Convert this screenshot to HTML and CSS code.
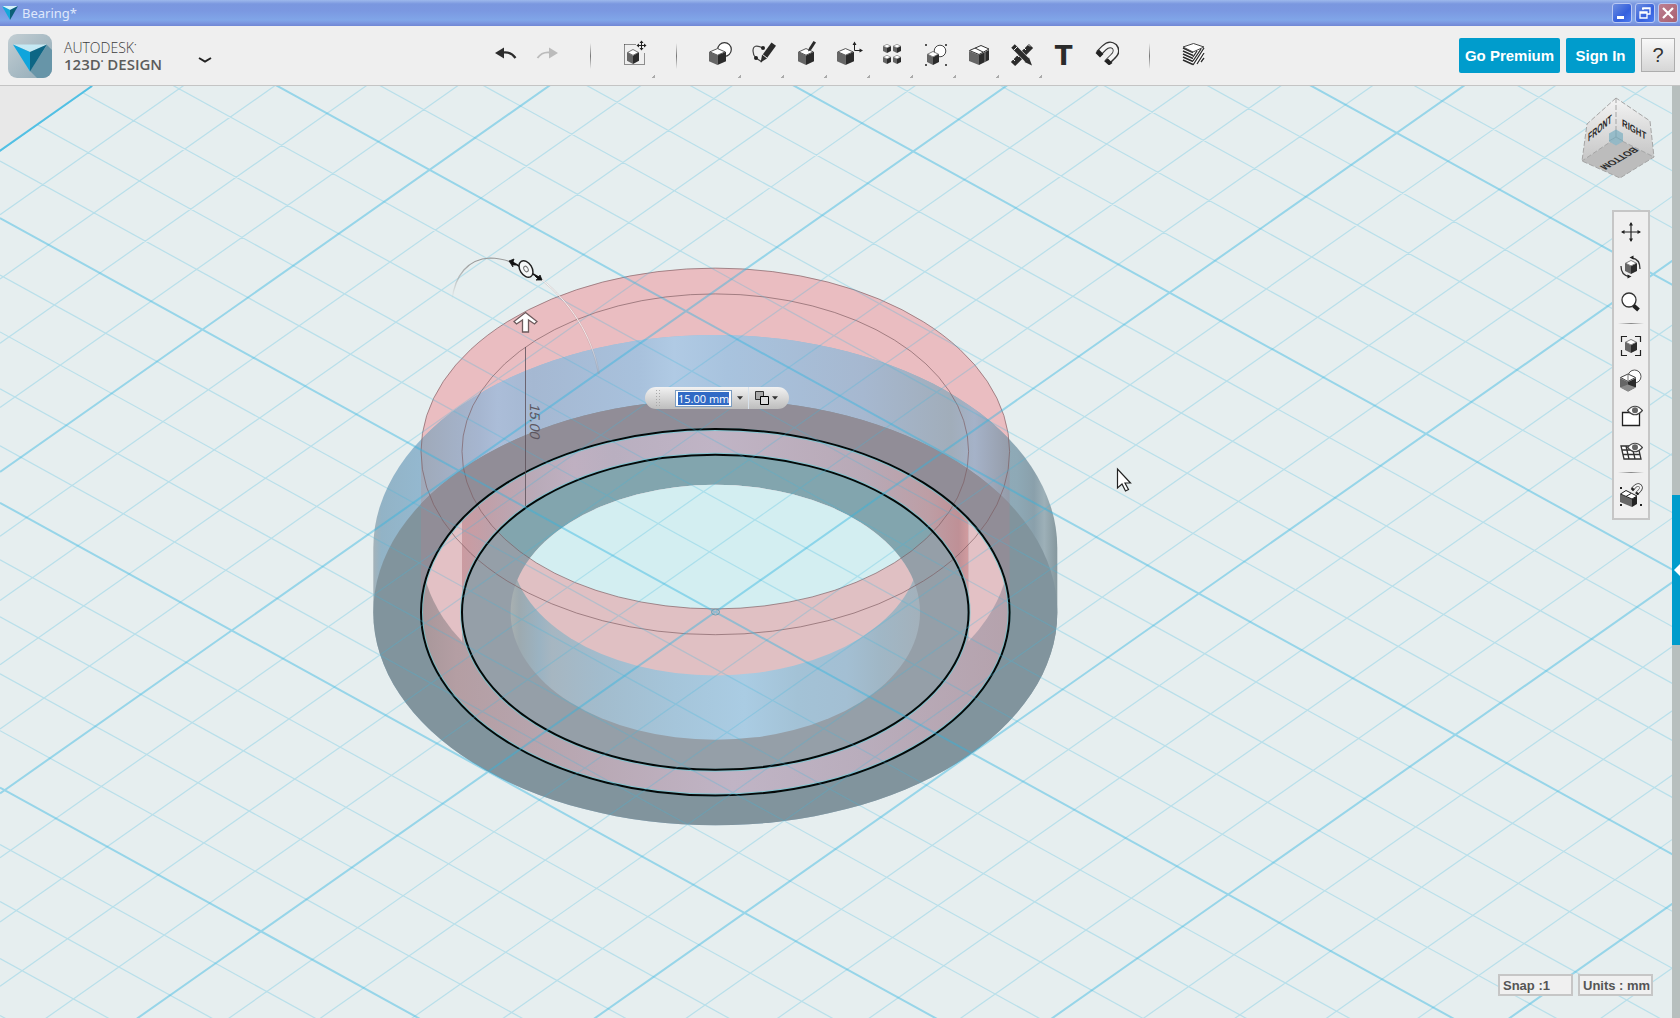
FILE: index.html
```html
<!DOCTYPE html>
<html lang="en">
<head>
<meta charset="utf-8">
<title>Bearing*</title>
<link rel="stylesheet" href="styles.css">
</head>
<body>
<svg class="defs" aria-hidden="true">
  <symbol id="cube" viewBox="0 0 16 18" preserveAspectRatio="none">
    <path d="M0 4l8 4v10l-8-4z" fill="#666"/><path d="M16 4l-8 4v10l8-4z" fill="#2b2b2b"/>
    <path d="M8 .6l7.200 3.500L8 7.600.8 4.100z" fill="#fff" stroke="#444" stroke-width=".9"/>
  </symbol>
  <symbol id="magnet" viewBox="0 0 24 24">
    <path d="M3.500 12.500L9 7Q14.500 1.500 19.500 5.500Q23.500 10.500 18 15.500L12.500 21" fill="none" stroke="#333" stroke-width="6.500"/>
    <path d="M4 12L9 7Q14.500 1.800 19.300 5.700Q23 10.500 17.800 15.300L13 20" fill="none" stroke="#f4f4f4" stroke-width="4.200"/>
    <path d="M4 8.500l4.500 4.500L5 16.500.5 12zM13 17.500l4.500 4.500-3.500 2.500-5-4.500z" fill="#222"/>
  </symbol>
  <symbol id="eye" viewBox="0 0 16 10">
    <path d="M.6 5Q8-3.500 15.400 5Q8 13.500.6 5z" fill="#fff" stroke="#444" stroke-width="1.200"/><circle cx="8" cy="4.800" r="3" fill="#666"/>
  </symbol>
</svg>

<header class="titlebar">
  <svg class="titlebar-logo" viewBox="0 0 16 16"><path d="M0 1h16l-8 4z" fill="#d6f3fa"/><path d="M0 1l8 4v10z" fill="#14a8da"/><path d="M16 1L8 5v10z" fill="#0b5f78"/></svg>
  <span class="titlebar-name">Bearing*</span>
  <div class="window-buttons">
    <button class="win" aria-label="Minimize"><svg viewBox="0 0 18 18"><path d="M4 12h7v3H4z" fill="#fff"/></svg></button>
    <button class="win" aria-label="Restore"><svg viewBox="0 0 18 18"><path d="M7 6V4h7v6h-3M6 4.500h8M4 8h7v6H4zM4 9h7" fill="none" stroke="#fff" stroke-width="1.300"/></svg></button>
    <button class="win win-close" aria-label="Close"><svg viewBox="0 0 18 18"><path d="M4 4l10 10M14 4L4 14" stroke="#fff" stroke-width="2.200"/></svg></button>
  </div>
</header>

<div class="toolbar">
  <button class="brand" aria-label="Application menu">
    <svg class="brand-logo" viewBox="0 0 44 44">
      <defs><linearGradient id="lg" x1="0" y1="0" x2="1" y2="1"><stop offset="0" stop-color="#c3ced3"/><stop offset="1" stop-color="#8fa9b6"/></linearGradient><clipPath id="lc"><rect width="44" height="44" rx="9"/></clipPath></defs>
      <g clip-path="url(#lc)"><rect width="44" height="44" fill="url(#lg)"/><path d="M39 11l10 10v30H36L22 37z" fill="#6795a8"/></g>
      <path d="M5 10.500h34L22 18z" fill="#c5e9f4"/><path d="M5 10.500L22 18v19.500z" fill="#10a5dc"/><path d="M39 10.500L22 18v19.500z" fill="#0d6685"/>
    </svg>
    <span class="brand-text"><span class="brand-top">AUTODESK<sup>•</sup></span><span class="brand-bottom">123D<sup>•</sup> DESIGN</span></span>
    <svg class="brand-arrow" viewBox="0 0 14 6"><path d="M1 1l6 3.500L13 1" fill="none" stroke="#222" stroke-width="2"/></svg>
  </button>

  <nav class="tools">
    <button class="tool" aria-label="Undo"><svg viewBox="0 0 36 36"><path d="M8 17l9-5.500v11z" fill="#2b2b2b"/><path d="M16 16.500q8-1 12.500 5.500" fill="none" stroke="#2b2b2b" stroke-width="2.200"/></svg></button>
    <button class="tool" aria-label="Redo" disabled><svg viewBox="0 0 36 36"><path d="M28 17l-9-5.500v11z" fill="#bbb"/><path d="M20 16.500q-8-1-12.500 5.500" fill="none" stroke="#bbb" stroke-width="1.800"/></svg></button>
    <span class="sep"></span>
    <button class="tool more" aria-label="Transform"><svg viewBox="0 0 36 36"><path d="M8.500 8.500H20M8.500 8.500v20h20V17" fill="none" stroke="#2b2b2b" stroke-dasharray="1 1"/><use href="#cube" x="11" y="13" width="12" height="15"/><path d="M25.500 5v9M21 9.500h9" stroke="#222"/><path d="M25.500 4.500l2 2.500h-4zM25.500 14.500l2-2.500h-4zM20.500 9.500l2.500-2v4zM30.500 9.500l-2.500-2v4z" fill="#222"/></svg></button>
    <span class="sep"></span>
    <button class="tool more" aria-label="Primitives"><svg viewBox="0 0 36 36"><circle cx="22.500" cy="13.500" r="6.800" fill="#fff" stroke="#333" stroke-width="1.200"/><use href="#cube" x="7" y="12" width="17" height="17"/></svg></button>
    <button class="tool more" aria-label="Sketch"><svg viewBox="0 0 36 36"><path d="M18 12Q8 7 8 15q0 4 3 7l6 4" fill="none" stroke="#444" stroke-width="1.200"/><circle cx="18" cy="12" r="2" fill="#222"/><circle cx="11" cy="22" r="2" fill="#222"/><path d="M15.500 26.500l1.500-7 9.500-13 4.500 3.200-9.500 13z" fill="#2b2b2b"/><path d="M17.500 18.500l4.500 3.500" stroke="#eee"/></svg></button>
    <button class="tool more" aria-label="Construct"><svg viewBox="0 0 36 36"><use href="#cube" x="10" y="12" width="16" height="17"/><path d="M20 15.500l1-3.500 4.500-7 2.500 1.500-4.500 7z" fill="#2b2b2b"/></svg></button>
    <button class="tool more" aria-label="Modify"><svg viewBox="0 0 36 36"><use href="#cube" x="6" y="12" width="17" height="17"/><path d="M23.500 14.500V8M23.500 14.500H29" stroke="#222" fill="none"/><path d="M23.500 5.500l2 3.500h-4zM32 14.500l-3.500-2v4z" fill="#222"/></svg></button>
    <button class="tool more" aria-label="Pattern"><svg viewBox="0 0 36 36"><use href="#cube" x="9" y="8" width="8" height="9"/><use href="#cube" x="19" y="8" width="8" height="9"/><use href="#cube" x="9" y="19" width="8" height="9"/><use href="#cube" x="19" y="19" width="8" height="9"/></svg></button>
    <button class="tool more" aria-label="Grouping"><svg viewBox="0 0 36 36"><path d="M8 8h2v2H8zM28 8h2v2h-2zM8 28h2v2H8zM28 28h2v2h-2z" fill="#555"/><circle cx="23" cy="15" r="5.800" fill="#fff" stroke="#444"/><use href="#cube" x="10" y="15" width="12" height="14"/></svg></button>
    <button class="tool more" aria-label="Combine"><svg viewBox="0 0 36 36"><path d="M9 15l10 4v10L9 25z" fill="#666"/><path d="M19 19l10-5v10l-10 5z" fill="#2b2b2b"/><path d="M25 16v10" stroke="#888"/><path d="M9.500 14.500L21 9.500l8 3.500-10 5.500z" fill="#fff" stroke="#333"/><path d="M15 12l8 4" stroke="#333"/></svg></button>
    <button class="tool more" aria-label="Measure"><svg viewBox="0 0 36 36"><path d="M10 28L28 10" stroke="#2b2b2b" stroke-width="6"/><path d="M10 23l2 2M14 19l2 2M21 12l2 2M25 8.500l2 2" stroke="#efefef"/><path d="M10.500 10.500L24 24" stroke="#efefef" stroke-width="6"/><path d="M10 10L24 24" stroke="#2b2b2b" stroke-width="5"/><path d="M21.500 26l4.500-4.500 3 8z" fill="#2b2b2b"/><path d="M11 14l3-3" stroke="#efefef"/></svg></button>
    <button class="tool" aria-label="Text"><span class="glyph">T</span></button>
    <button class="tool" aria-label="Snap"><svg viewBox="0 0 36 36"><use href="#magnet" x="6" y="5" width="24" height="24"/></svg></button>
    <span class="sep"></span>
    <button class="tool" aria-label="Material"><svg viewBox="0 0 36 36"><path d="M8 11l10 5v13L8 25z" fill="#fff"/><path d="M29 11l-11 5v13l11-4z" fill="#fff"/><path d="M8 12l10 4.500M8 15l10 4.500M8 18l10 4.500M8 21l10 4.500M8 24l10 4.500" stroke="#2b2b2b" stroke-width="1.600"/><path d="M18 21l4-6M18 25l8-12M18 29L29 12M22 28l7-11M26 26l3-4" stroke="#2b2b2b" stroke-width="1.300"/><path d="M8 11l10.500-3.500L29 11l-11 5z" fill="#fff" stroke="#444"/></svg></button>
  </nav>

  <div class="account">
    <button class="cta premium">Go Premium</button>
    <button class="cta signin">Sign In</button>
    <button class="help" aria-label="Help">?</button>
  </div>
</div>

<main class="workspace">
  <div class="canvas">
    <svg class="scene" viewBox="0 86 1672 932" preserveAspectRatio="xMinYMin slice" role="img" aria-label="Bearing model">
      <defs>
        <clipPath id="plane"><path d="M-1 151.400L92 86H1700V1100H-1z"/></clipPath>
        <clipPath id="pinkHull"><path d="M421 451.400A294.300 183.300 0 0 1 1009.600 451.400V612.300A294.300 183.300 0 0 1 421 612.300z"/></clipPath>
        <clipPath id="grooveFront"><ellipse cx="715.300" cy="612.300" rx="294.300" ry="183.300"/></clipPath>
        <clipPath id="pinkBackInner"><ellipse cx="715.300" cy="451.400" rx="253.300" ry="157.500"/></clipPath>
        <clipPath id="hole"><ellipse cx="715.300" cy="612.300" rx="204.700" ry="127.500"/></clipPath>
        <clipPath id="holeBack"><ellipse cx="715.300" cy="548" rx="204.700" ry="127.500"/></clipPath>
        <clipPath id="sides"><path d="M400 400h62v400h-62zM968.500 400h60v400h-60z"/></clipPath>
        <linearGradient id="wall" gradientUnits="userSpaceOnUse" x1="373" y1="0" x2="1058" y2="0">
          <stop offset="0" stop-color="#a5b2b8"/><stop offset=".012" stop-color="#92b3c6"/><stop offset=".07" stop-color="#94b8cf"/><stop offset=".5" stop-color="#a0c0d8"/><stop offset=".94" stop-color="#8ea9b6"/><stop offset=".965" stop-color="#8aa0ab"/><stop offset=".98" stop-color="#9db0b8"/><stop offset="1" stop-color="#84969c"/>
        </linearGradient>
        <linearGradient id="wallPink" gradientUnits="userSpaceOnUse" x1="421" y1="0" x2="1010" y2="0">
          <stop offset="0" stop-color="#9fa9b9"/><stop offset=".1" stop-color="#a6b6d0"/><stop offset=".13" stop-color="#abbdd8"/><stop offset=".19" stop-color="#a5b8d2"/><stop offset=".37" stop-color="#a8c1dc"/><stop offset=".43" stop-color="#b0cae4"/><stop offset=".52" stop-color="#a8c3de"/><stop offset=".75" stop-color="#a6b8d0"/><stop offset=".9" stop-color="#a1adba"/><stop offset=".94" stop-color="#a5b2c8"/><stop offset="1" stop-color="#959ca9"/>
        </linearGradient>
        <linearGradient id="grooveTop" gradientUnits="userSpaceOnUse" x1="462" y1="0" x2="969" y2="0">
          <stop offset="0" stop-color="#cb9ba1"/><stop offset=".05" stop-color="#c0a0a9"/><stop offset=".15" stop-color="#b9abb9"/><stop offset=".22" stop-color="#bfb0c1"/><stop offset=".3" stop-color="#b9afc0"/><stop offset=".5" stop-color="#c0b4c5"/><stop offset=".8" stop-color="#b8a9b6"/><stop offset=".92" stop-color="#bd9ea5"/><stop offset=".98" stop-color="#bf9096"/><stop offset="1" stop-color="#d39da0"/>
        </linearGradient>
        <linearGradient id="grooveLow" gradientUnits="userSpaceOnUse" x1="421" y1="0" x2="1010" y2="0">
          <stop offset="0" stop-color="#a8979a"/><stop offset=".06" stop-color="#b49ea3"/><stop offset=".3" stop-color="#b9a9b5"/><stop offset=".53" stop-color="#c0b4c5"/><stop offset=".75" stop-color="#b9adbc"/><stop offset="1" stop-color="#b5a2ac"/>
        </linearGradient>
        <linearGradient id="bore" gradientUnits="userSpaceOnUse" x1="511" y1="0" x2="920" y2="0">
          <stop offset="0" stop-color="#a8b0b1"/><stop offset=".02" stop-color="#9daab0"/><stop offset=".07" stop-color="#9bb3c2"/><stop offset=".1" stop-color="#a6b6c1"/><stop offset=".22" stop-color="#a2bccd"/><stop offset=".4" stop-color="#a5c5da"/><stop offset=".57" stop-color="#aacce3"/><stop offset=".7" stop-color="#a3c2d6"/><stop offset=".82" stop-color="#a3bfd3"/><stop offset=".9" stop-color="#a0b7c6"/><stop offset="1" stop-color="#a3b1bb"/>
        </linearGradient>
        <linearGradient id="arcFade" x1="0" y1="1" x2="0" y2="0"><stop offset="0" stop-color="#aaa" stop-opacity="0"/><stop offset=".9" stop-color="#999"/></linearGradient>
        <linearGradient id="arcLight" x1="0" y1="0" x2="0" y2="1"><stop offset="0" stop-color="#fbf6f6"/><stop offset=".6" stop-color="#f0e6e8"/><stop offset="1" stop-color="#eee" stop-opacity="0"/></linearGradient>
      </defs>

      <rect y="86" width="1700" height="1000" fill="#e8e8e8"/>
      <path d="M-1 151.400L92 86H1700V1100H-1z" fill="#e6eeef"/>

      <ellipse cx="715.300" cy="451.400" rx="294.300" ry="183.300" fill="#eabdc1"/>
      <path d="M373.300 548A342 213 0 0 1 1057.300 548V612.300A342 213 0 0 1 373.300 612.300z" fill="url(#wall)"/>
      <path d="M373.300 548A342 213 0 0 1 1057.300 548V612.300H373.300z" fill="url(#wallPink)" clip-path="url(#pinkHull)"/>
      <ellipse cx="715.300" cy="612.300" rx="342" ry="213" fill="#81949d"/>
      <ellipse cx="715.300" cy="612.300" rx="342" ry="213" fill="#918d97" clip-path="url(#pinkHull)"/>
      <ellipse cx="715.300" cy="612.300" rx="294.300" ry="183.300" fill="url(#grooveLow)"/>
      <g clip-path="url(#grooveFront)">
        <rect x="462" y="420" width="506.500" height="192" fill="url(#grooveTop)"/>
        <g clip-path="url(#sides)"><path d="M421 430H1009.600V548A294.300 183.300 0 0 1 421 548z" fill="#e3c1c5"/></g>
      </g>
      <ellipse cx="715.300" cy="612.300" rx="253.300" ry="157.500" fill="#959fa8"/>
      <ellipse cx="715.300" cy="612.300" rx="253.300" ry="157.500" fill="#82a5ae" clip-path="url(#pinkBackInner)"/>
      <ellipse cx="715.300" cy="612.300" rx="204.700" ry="127.500" fill="url(#bore)"/>
      <g clip-path="url(#hole)"><ellipse cx="715.300" cy="548" rx="204.700" ry="127.500" fill="#e0c0c3"/>
        <g clip-path="url(#holeBack)"><ellipse cx="715.300" cy="451.400" rx="253.300" ry="157.500" fill="#d3eef1"/></g></g>

      <g fill="none" stroke="#7d5a60" stroke-opacity=".65">
        <ellipse cx="715.300" cy="451.400" rx="294.300" ry="183.300"/>
        <ellipse cx="715.300" cy="451.400" rx="253.300" ry="157.500"/>
      </g>
      <g fill="none" stroke="#5fd0da" stroke-width="3" stroke-opacity=".6">
        <ellipse cx="715.300" cy="612.300" rx="293.800" ry="182.800"/>
        <ellipse cx="715.300" cy="612.300" rx="253.800" ry="158"/>
      </g>
      <g fill="none" stroke="#050808" stroke-width="2">
        <ellipse cx="715.300" cy="612.300" rx="294.300" ry="183.300"/>
        <ellipse cx="715.300" cy="612.300" rx="253.300" ry="157.500"/>
      </g>

      <g clip-path="url(#plane)">
        <path id="gridMinor" class="grid-minor"/>
        <path id="gridMajor" class="grid-major"/>
      </g>
      <path d="M-1 151.400L92 86" stroke="#52c0e4" stroke-width="2"/>
      <ellipse cx="715.500" cy="612" rx="4" ry="3" fill="none" stroke="#6d9fb2"/>

      <g class="manipulator">
        <path d="M452 300C455 275 468 259 490 258Q500 258 511 262" fill="none" stroke="url(#arcFade)" stroke-width="1.200"/>
        <path d="M541 279C570 302 592 335 599 374" fill="none" stroke="#988" stroke-width="2" stroke-opacity=".25"/>
        <path d="M541 279C570 302 592 335 599 374" fill="none" stroke="url(#arcLight)" stroke-width="1"/>
        <path d="M512 262l28 16" stroke="#111" stroke-width="1.500"/>
        <path d="M509 261l5-2-1 3 3 3-4 0 1 2zM542 280l-2-5-1 2-4-1 3 3-2 1z" fill="#111" stroke="#111" stroke-width=".8"/>
        <ellipse cx="526" cy="269" rx="6" ry="9" transform="rotate(-32 526 269)" fill="#f6f8f8" stroke="#222" stroke-width="1.500"/>
        <ellipse cx="526" cy="269" rx="2" ry="3" transform="rotate(-32 526 269)" fill="none" stroke="#777"/>
        <path d="M525.500 312.500l11.500 9-2.500 2.500-6-4V332h-6v-12l-6 4-2.500-2.500z" fill="#fff" stroke="#6c5a5c" stroke-width="1.300"/>
        <path d="M525.500 347V506" stroke="#5b4f57" stroke-opacity=".8"/>
        <text class="dimension" transform="translate(530 403) rotate(90) skewX(-15)">15.00</text>
      </g>
      <path d="M1117.500 469v19l4.500-4 3.500 7 3-1.500-3.500-6.500h5.500z" fill="#fff" stroke="#222" stroke-width="1.200"/>
    </svg>

    <div class="value-pill">
      <span class="grip"></span>
      <input class="value" type="text" value="15.00 mm" aria-label="Distance">
      <button class="pill-btn" aria-label="Distance options"><svg viewBox="0 0 7 4"><path d="M0 0h7L3.500 4z" fill="#333"/></svg></button>
      <button class="pill-btn pill-mode" aria-label="Combine mode"><svg class="mode" viewBox="0 0 14 14"><path d="M.5.5h8v8h-8z" fill="#aaa" stroke="#333"/><path d="M5.500 5.500h8v8h-8z" fill="#ddd" stroke="#000"/></svg><svg viewBox="0 0 7 4"><path d="M0 0h7L3.500 4z" fill="#333"/></svg></button>
    </div>

    <svg class="viewcube" viewBox="0 0 76 86" role="img" aria-label="View cube">
      <defs><linearGradient id="vf" x1="0" y1="0" x2="0" y2="1"><stop offset="0" stop-color="#f4f4f4"/><stop offset="1" stop-color="#c6c6c6"/></linearGradient></defs>
      <path d="M36 3L7 29 2 66 36 43z" fill="url(#vf)"/><path d="M36 3l34 23 4 36L36 43z" fill="url(#vf)"/><path d="M2 66L36 43 74 62 40 83z" fill="#bcbcbc"/>
      <path d="M36 3L7 29 2 66 40 83 74 62 70 26zM36 3V43L2 66M36 43L74 62" fill="none" stroke="#a5a5a5" stroke-dasharray="5 2"/>
      <path d="M36 34.500l7 4v8l-7 4-7-4v-8z" fill="#8fb8c6" fill-opacity=".9"/><path d="M36 42l-7 4M36 42l7 4M36 42v-7" stroke="#84a9b6"/>
      <g class="cube-text">
        <text transform="translate(8 47) rotate(-40) skewX(-40)">FRONT</text>
        <text transform="translate(42 31) rotate(30) skewX(30)">RIGHT</text>
        <text transform="translate(53 52) rotate(150) skewX(30)">BOTTOM</text>
      </g>
    </svg>

    <nav class="side">
      <button class="side-btn" aria-label="Pan"><svg viewBox="0 0 24 24"><path d="M12 3v18M3 12h18" stroke="#222" stroke-width="1.200"/><path d="M12 2l2 3.500h-4zM12 22l2-3.500h-4zM2 12l3.500-2v4zM22 12l-3.500-2v4z" fill="#222"/></svg></button>
      <button class="side-btn" aria-label="Orbit"><svg viewBox="0 0 24 24"><use href="#cube" x="6" y="5" width="12" height="14"/><path d="M21 14Q21 4 13 3M2 11Q2 20 10 21.500" fill="none" stroke="#333" stroke-width="1.300"/><path d="M10.500 2.500l4-2v4zM12.500 21.500l-4 2v-4z" fill="#222"/></svg></button>
      <button class="side-btn" aria-label="Zoom"><svg viewBox="0 0 24 24"><circle cx="10" cy="10" r="7" fill="#fff" stroke="#333" stroke-width="1.300"/><path d="M14.500 15.500l5 4.500" stroke="#222" stroke-width="4"/></svg></button>
      <span class="side-sep"></span>
      <button class="side-btn" aria-label="Fit"><svg viewBox="0 0 24 24"><path d="M2.500 8V2.500H8M16 2.500h5.500V8M21.500 16v5.500H16M8 21.500H2.500V16" fill="none" stroke="#222" stroke-width="1.200"/><use href="#cube" x="6" y="5" width="12" height="14"/></svg></button>
      <button class="side-btn" aria-label="Display mode"><svg viewBox="0 0 24 24"><circle cx="15.500" cy="7.500" r="6.500" fill="#fff" stroke="#555"/><path d="M1 9l8 4v9.500l-8-4.500z" fill="#666"/><path d="M17 9l-8 4v9.500l8-4.500z" fill="#2b2b2b"/><path d="M9 15.500l8 3-8 4-8-4z" fill="#8a8a8a"/><path d="M1.500 8.500L9 5l7.500 3.500L9 12.500z" fill="#fff" stroke="#444"/><path d="M9 5v7" stroke="#777"/></svg></button>
      <button class="side-btn" aria-label="Visibility"><svg viewBox="0 0 24 24"><path d="M3.500 8.500h17v13h-17z" fill="#fff" stroke="#222" stroke-width="1.300"/><use href="#eye" x="8" y="1" width="16" height="11"/></svg></button>
      <button class="side-btn" aria-label="Grid visibility"><svg viewBox="0 0 24 24"><path d="M2 7h17l3 13H5zM3 11h17M4 15.500h17M7 7l3 13M13 7l3 13" fill="#fff" stroke="#333" stroke-width="1.300"/><use href="#eye" x="8" y="3" width="16" height="11"/></svg></button>
      <span class="side-sep"></span>
      <button class="side-btn" aria-label="Snap settings"><svg viewBox="0 0 24 24"><path d="M1 4h2v2H1zM1 21h2v2H1zM21 21h2v2h-2z" fill="#222"/><path d="M1 11l12 5v8L1 19z" fill="#666"/><path d="M13 16l5-3v8l-5 3z" fill="#222"/><path d="M1.500 11L7 7.500l11 5.500-5 3z" fill="#fff" stroke="#222"/><path d="M7 13.500l5-3" stroke="#222"/><use href="#magnet" x="11" y="0" width="13" height="12"/></svg></button>
    </nav>

    <div class="status">
      <button class="status-btn">Snap :1</button>
      <button class="status-btn">Units : mm</button>
    </div>
  </div>
  <aside class="rail"><button class="rail-tab" aria-label="Open parts library"><svg viewBox="0 0 6 12"><path d="M6 0v12L0 6z" fill="#fff"/></svg></button></aside>
</main>
<script src="grid.js"></script>
</body>
</html>
```
FILE: styles.css
```css
* { box-sizing: border-box; }
html, body { height: 100%; }
body {
  margin: 0;
  display: flex;
  flex-direction: column;
  overflow: hidden;
  background: #efefef;
  font-family: "Liberation Sans", Arial, sans-serif;
}
button { margin: 0; padding: 0; border: 0; background: none; font: inherit; color: inherit; }
.defs { position: absolute; width: 0; height: 0; }

.titlebar {
  flex: none;
  height: 26px;
  display: flex;
  align-items: center;
  padding: 0 2px;
  background: linear-gradient(#9db9ec 0, #7a97df 4px, #7b98e1 11px, #80a6e8 20px, #7b97e0 23px, #6f86d4 26px);
}
.titlebar-logo { width: 16px; height: 16px; }
.titlebar-name { flex: 1; margin-left: 4px; font: 13px "Noto Sans", sans-serif; color: #dfe8fb; }
.window-buttons { display: flex; gap: 3px; }
.win {
  width: 20px;
  height: 20px;
  border: 1px solid #b9c8f3;
  border-radius: 3px;
  background: linear-gradient(135deg, #6c8de0, #3560dd 60%, #4c7bf0);
  display: flex;
}
.win-close { background: linear-gradient(135deg, #bd7f92, #a8606f); }
.win svg { width: 18px; height: 18px; }

.toolbar {
  flex: none;
  height: 60px;
  display: flex;
  align-items: center;
  padding: 0 5px 0 8px;
  border-bottom: 1px solid #c4c4c4;
  background: #efefef;
}
.brand { width: 475px; display: flex; align-items: center; text-align: left; color: #5c5c5c; }
.brand-logo { width: 44px; height: 44px; }
.brand-text { width: 134px; margin-left: 12px; display: flex; flex-direction: column; font-family: "Open Sans", sans-serif; line-height: 16px; }
.brand-text sup { font-size: 7px; line-height: 0; }
.brand-top { font-size: 14px; font-weight: 300; color: #3c3c3c; }
.brand-bottom { font-size: 15px; font-weight: 600; }
.brand-arrow { width: 14px; height: 6px; margin-top: 8px; }

.tools { flex: 1; display: flex; align-items: center; height: 59px; }
.tool { position: relative; flex: none; width: 43px; height: 59px; display: flex; align-items: center; justify-content: center; padding-bottom: 3px; }
.tool svg { width: 36px; height: 36px; }
.more::after { content: ""; position: absolute; right: 0; bottom: 7px; width: 3px; height: 3px; background: linear-gradient(135deg, transparent 40%, #aaa 40%); }
.glyph { font: bold 26px/28px "DejaVu Sans", sans-serif; color: #2b2b2b; padding-top: 3px; }
.sep { flex: none; width: 43px; height: 26px; background: linear-gradient(transparent, #777, transparent) center / 1px 26px no-repeat; }

.account { display: flex; gap: 6px; align-items: flex-start; }
.cta { height: 35px; border-radius: 2px; background: #009ccc; color: #fff; font-weight: bold; font-size: 15px; }
.premium { width: 101px; }
.signin { width: 69px; }
.help { width: 34px; height: 34px; border: 1px solid #adadad; background: linear-gradient(#f8f8f8, #d6d6d6); font-size: 20px; color: #333; }

.workspace { flex: 1; min-height: 0; display: flex; }
.canvas { position: relative; flex: 1; min-width: 0; background: #e6eeef; }
.scene { position: absolute; inset: 0; width: 100%; height: 100%; display: block; }
.grid-minor { fill: none; stroke: #3fb8de; stroke-width: 1.2px; stroke-opacity: .27; }
.grid-major { fill: none; stroke: #2fb4e0; stroke-width: 2px; stroke-opacity: .43; }
.dimension { font: 14px "Liberation Sans", sans-serif; fill: #5c5660; }

.value-pill {
  position: absolute;
  left: 645px;
  top: 301px;
  width: 144px;
  height: 22px;
  display: flex;
  align-items: center;
  border-radius: 11px;
  background: linear-gradient(#f2f2f2, #bdbdbd);
}
.grip { width: 30px; height: 18px; background: radial-gradient(circle, #aaa 1px, transparent 1px) 10px 0 / 3px 3px; background-clip: content-box; padding: 0 15px 0 10px; }
.value {
  width: 57px;
  height: 17px;
  padding: 1px 2px;
  border: 1px solid #7b9cc0;
  background: linear-gradient(#316ac5, #316ac5) content-box, #fff;
  color: #fff;
  font: 11px/13px "Open Sans", sans-serif;
  text-align: center;
}
.pill-btn { width: 16px; height: 22px; display: flex; align-items: center; justify-content: center; }
.pill-btn svg { width: 6px; height: 4px; }
.pill-mode { width: 35px; gap: 3px; border-left: 1px solid #d8e2ec; }
.pill-btn .mode { width: 14px; height: 14px; }

.viewcube { position: absolute; top: 9px; right: 16px; width: 76px; height: 86px; }
.cube-text { font: bold 9px "Liberation Sans", sans-serif; fill: #2c2c2c; }

.side {
  position: absolute;
  top: 124px;
  right: 22px;
  width: 38px;
  padding: 2px 0 6px;
  border: 2px solid #c6c6c6;
  background: #efefef;
  display: flex;
  flex-direction: column;
  align-items: center;
}
.side-btn { width: 34px; height: 35px; display: flex; align-items: center; justify-content: center; }
.side-btn svg { width: 24px; height: 24px; }
.side-sep { width: 26px; height: 9px; background: linear-gradient(90deg, transparent, #888, transparent) center / 26px 1px no-repeat; }

.status { position: absolute; right: 19px; bottom: 22px; display: flex; gap: 5px; }
.status-btn { width: 75px; height: 22px; padding: 0 3px; border: 2px solid #c6c6c6; background: #f0f0f0; color: #555; font-weight: bold; font-size: 13px; text-align: left; white-space: nowrap; }

.rail { flex: none; width: 8px; padding-top: 409px; background: #b7bfbe; }
.rail-tab { width: 8px; height: 150px; display: flex; align-items: center; justify-content: flex-end; background: #009ccc; }
.rail-tab svg { width: 6px; height: 12px; }
```
FILE: grid.js
```js
// Work plane seen from below: two families of parallel lines through the origin.
const origin = { x: 715.3, y: 612 };
const width = 1680;
const families = [
  { slope: 0.5508, step: 56.96, from: -30, to: 30 },
  { slope: -0.703, step: 64.3, from: -15, to: 30 }
];
let minor = "";
let major = "";
for (const f of families) {
  for (let n = f.from; n <= f.to; n++) {
    const y0 = origin.y + n * f.step - f.slope * origin.x;
    const seg = `M0 ${y0}L${width} ${y0 + f.slope * width}`;
    if (n % 5 === 0) major += seg; else minor += seg;
  }
}
document.getElementById("gridMinor").setAttribute("d", minor);
document.getElementById("gridMajor").setAttribute("d", major);
```
